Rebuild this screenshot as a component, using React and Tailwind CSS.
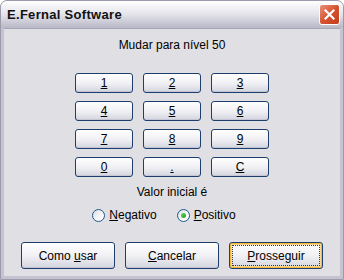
import React from "react";

const font = { fontFamily: '"Liberation Sans", Arial, sans-serif' };

// XP silver style push button
const XpButton = ({ children, className = "", isDefault = false }) => (
  <button
    type="button"
    className={`rounded-[3px] border border-[#1d3f6e] bg-gradient-to-b from-[#ffffff] via-[#f1f1f5] to-[#d4d4df] text-[12px] text-black ${
      isDefault ? "p-[2px] shadow-[inset_0_0_0_1px_#f5b63c,inset_0_0_0_2px_#fcd78c]" : "shadow-[inset_0_-1px_0_#c5c5d3]"
    } ${className}`}
  >
    {isDefault ? (
      <span className="flex h-full w-full items-center justify-center border border-dotted border-[#3a3a3a]">
        {children}
      </span>
    ) : (
      children
    )}
  </button>
);

const Radio = ({ checked, label, accel }) => (
  <label className="flex items-center gap-[4px] text-[12px] text-black">
    <span className="flex h-[13px] w-[13px] items-center justify-center rounded-full border border-[#1e5a8c] bg-gradient-to-br from-[#dcdce2] via-[#f4f4f6] to-[#ffffff]">
      {checked && (
        <span className="h-[5px] w-[5px] rounded-full bg-gradient-to-br from-[#55d655] to-[#21a121]" />
      )}
    </span>
    <span>
      <span className="underline underline-offset-1">{accel}</span>
      {label}
    </span>
  </label>
);

export default function App() {
  const keys = ["1", "2", "3", "4", "5", "6", "7", "8", "9", "0", ".", "C"];

  return (
    <div style={font} className="h-[280px] w-[344px] overflow-hidden bg-white">
      <div className="flex h-[280px] w-[344px] flex-col rounded-t-[7px] bg-[#c4c3cf] border border-[#9c9aab]">
        {/* Title bar */}
        <div className="flex h-[27px] shrink-0 items-center justify-between rounded-t-[6px] bg-gradient-to-b from-[#ffffff] via-[#e3e3ea] to-[#b9b8c7] pl-[6px] pr-[3px]">
          <span className="text-[13px] font-bold tracking-[0.3px] text-[#111]">
            E.Fernal Software
          </span>
          <span className="flex h-[21px] w-[21px] items-center justify-center rounded-[3px] border border-white bg-gradient-to-br from-[#e8917a] via-[#d6522f] to-[#c23e1d]">
            <svg width="11" height="11" viewBox="0 0 11 11">
              <path d="M1.5 1.5 L9.5 9.5 M9.5 1.5 L1.5 9.5" stroke="white" strokeWidth="2.2" strokeLinecap="square" />
            </svg>
          </span>
        </div>

        {/* Body */}
        <div className="mx-[3px] mb-[3px] flex flex-1 flex-col items-center border-t border-[#a7a6b5] bg-[#e0dfe3]">
          <div className="mt-[9px] text-[12px] leading-[14px] text-black">Mudar para nível 50</div>

          <div className="mt-[21px] grid grid-cols-3 gap-x-[10px] gap-y-[8px]">
            {keys.map((k) => (
              <XpButton key={k} className="h-[20px] w-[58px] leading-none">
                <span className="underline underline-offset-1">{k}</span>
              </XpButton>
            ))}
          </div>

          <div className="mt-[8px] text-[12px] leading-[14px] text-black">Valor inicial é</div>

          <div className="mt-[7px] flex gap-[20px] pr-[16px]">
            <Radio label="egativo" accel="N" />
            <Radio checked label="ositivo" accel="P" />
          </div>

          <div className="mt-[18px] flex gap-[10px]">
            <XpButton className="h-[27px] w-[94px]">
              Como <span className="underline underline-offset-1">u</span>sar
            </XpButton>
            <XpButton className="h-[27px] w-[94px]">
              <span className="underline underline-offset-1">C</span>ancelar
            </XpButton>
            <XpButton isDefault className="h-[27px] w-[94px]">
              <span>
                <span className="underline underline-offset-1">P</span>rosseguir
              </span>
            </XpButton>
          </div>
        </div>
      </div>
    </div>
  );
}
